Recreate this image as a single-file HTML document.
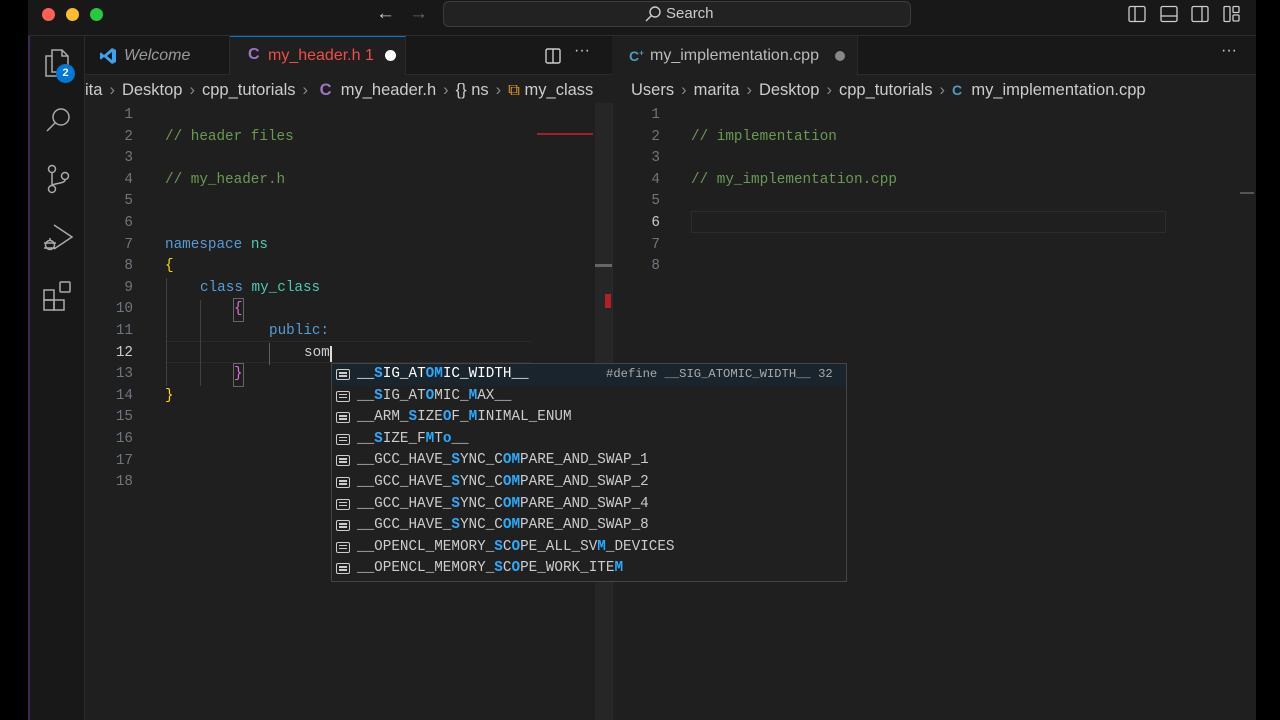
<!DOCTYPE html>
<html><head><style>
*{margin:0;padding:0;box-sizing:border-box}
body{width:1280px;height:720px;background:#000;position:relative;overflow:hidden;font-family:"Liberation Sans",sans-serif;color:#ccc}
.abs{position:absolute}
.mono{font-family:"Liberation Mono",monospace;font-size:14.3px;white-space:pre}
#win{left:28px;top:0;width:1228px;height:720px;background:#1f1f1f}
.ln{position:absolute;width:40px;text-align:right;color:#6e7681}
.cm{color:#6a9955}.kw{color:#569cd6}.ty{color:#4ec9b0}.br{color:#ffd700}.pb{color:#da70d6}
.row{position:absolute;left:0;height:21.6px;line-height:21.6px;width:100%}
.ic{position:absolute;left:4px;top:5px;width:14px;height:11px;border:1.5px solid #ccc;border-radius:2px}
.ic:before,.ic:after{content:"";position:absolute;left:2px;right:2px;height:1.5px;background:#ccc}
.ic:before{top:2px}.ic:after{top:5px}
.h{color:#2aaaff;font-weight:bold}
.bc{font-size:16.5px;color:#ccc;position:absolute;top:81px;white-space:nowrap}
.sep{color:#888;margin:0 7px}
</style></head><body>
<div id="win" class="abs"></div>
<!-- title bar -->
<div class="abs" style="left:28px;top:0;width:1228px;height:36px;background:#181818;border-bottom:1px solid #2b2b2b"></div>
<div class="abs" style="left:42px;top:8px;width:13px;height:13px;border-radius:50%;background:#fe5f57"></div>
<div class="abs" style="left:66px;top:8px;width:13px;height:13px;border-radius:50%;background:#febc2e"></div>
<div class="abs" style="left:90px;top:8px;width:13px;height:13px;border-radius:50%;background:#28c840"></div>
<div class="abs" style="left:376px;top:3px;font-size:19px;color:#ccc">←</div>
<div class="abs" style="left:409px;top:3px;font-size:19px;color:#666">→</div>
<div class="abs" style="left:443px;top:1px;width:468px;height:26px;border:1px solid #3c3c3c;border-radius:6px;background:#222"></div>
<svg class="abs" style="left:644px;top:5px" width="18" height="18" viewBox="0 0 18 18"><circle cx="11" cy="7" r="5" fill="none" stroke="#ccc" stroke-width="1.4"/><path d="M7.5 10.5L2 16" stroke="#ccc" stroke-width="1.4"/></svg>
<div class="abs" style="left:666px;top:5px;font-size:15px;color:#ccc">Search</div>
<svg class="abs" style="left:1128px;top:5px" width="120" height="18" viewBox="0 0 120 18" fill="none" stroke="#ccc" stroke-width="1.3">
<rect x="1" y="1.5" width="16" height="15" rx="1.5"/><path d="M7 1.5v15"/>
<rect x="33" y="1.5" width="16" height="15" rx="1.5"/><path d="M33 11h16"/>
<rect x="64" y="1.5" width="16" height="15" rx="1.5"/><path d="M74 1.5v15"/>
<rect x="96" y="1.5" width="6" height="15" rx="1"/><rect x="105" y="1.5" width="6" height="6" rx="1"/><rect x="105" y="10" width="6" height="6" rx="1"/></svg>
<!-- activity bar -->
<div class="abs" style="left:28px;top:36px;width:57px;height:684px;background:#181818;border-right:1px solid #2b2b2b"></div>
<div class="abs" style="left:28px;top:36px;width:2px;height:684px;background:#3a2a55"></div>
<svg class="abs" style="left:42px;top:46px" width="32" height="34" viewBox="0 0 32 34" fill="none" stroke="#aaa" stroke-width="1.5"><path d="M10 4h10l6 6v16H10z"/><path d="M20 4v6h6"/><path d="M10 10H4v20h16v-4"/></svg>
<div class="abs" style="left:56px;top:64px;width:19px;height:19px;border-radius:50%;background:#0078d4;color:#fff;font-size:11px;font-weight:bold;text-align:center;line-height:19px">2</div>
<svg class="abs" style="left:44px;top:106px" width="28" height="28" viewBox="0 0 28 28" fill="none" stroke="#aaa" stroke-width="1.5"><circle cx="17" cy="11" r="8"/><path d="M11 17L3 25"/></svg>
<svg class="abs" style="left:44px;top:164px" width="28" height="30" viewBox="0 0 28 30" fill="none" stroke="#aaa" stroke-width="1.5"><circle cx="8" cy="5" r="3.5"/><circle cx="8" cy="25" r="3.5"/><circle cx="21" cy="12" r="3.5"/><path d="M8 9v12M21 16c0 4-13 3-13 6"/></svg>
<svg class="abs" style="left:42px;top:222px" width="32" height="32" viewBox="0 0 32 32" fill="none" stroke="#aaa" stroke-width="1.5"><path d="M12 3l18 12-18 12" /><circle cx="8" cy="23" r="4.5"/><path d="M2 21h12M2 26h12M8 18v-2"/></svg>
<svg class="abs" style="left:42px;top:280px" width="32" height="32" viewBox="0 0 32 32" fill="none" stroke="#aaa" stroke-width="1.5"><rect x="2" y="10" width="10" height="10"/><rect x="2" y="20" width="10" height="10"/><rect x="12" y="20" width="10" height="10"/><rect x="18" y="2" width="10" height="10" rx="1"/></svg>
<!-- tab bar left -->
<div class="abs" style="left:85px;top:36px;width:527px;height:39px;background:#181818;border-bottom:1px solid #2b2b2b"></div>
<div class="abs" style="left:85px;top:36px;width:145px;height:39px;border-right:1px solid #2b2b2b"></div>
<svg class="abs" style="left:99px;top:47px" width="18" height="18" viewBox="0 0 18 18"><path d="M13 1L17 3v12l-4 2L5 10l-3 2.5L1 12V6l1-.5L5 8z M13 5L8 9l5 4z" fill="#3ba1f0" fill-rule="evenodd"/></svg>
<div class="abs" style="left:124px;top:47px;font-size:16px;font-style:italic;color:#999">Welcome</div>
<div class="abs" style="left:230px;top:36px;width:176px;height:39px;background:#1f1f1f;border-top:1px solid #0078d4;border-right:1px solid #2b2b2b"></div>
<div class="abs" style="left:248px;top:46px;font-size:16px;font-weight:bold;color:#a074c4">C</div>
<div class="abs" style="left:268px;top:47px;font-size:16px;color:#f14c4c">my_header.h 1</div>
<div class="abs" style="left:385px;top:50px;width:11px;height:11px;border-radius:50%;background:#fff"></div>
<svg class="abs" style="left:544px;top:47px" width="18" height="18" viewBox="0 0 18 18" fill="none" stroke="#ccc" stroke-width="1.4"><rect x="2" y="2" width="14" height="14" rx="1.5"/><path d="M9 2v14"/></svg>
<div class="abs" style="left:574px;top:42px;font-size:16px;color:#ccc">···</div>
<!-- tab bar right -->
<div class="abs" style="left:612px;top:36px;width:644px;height:39px;background:#181818;border-bottom:1px solid #2b2b2b;border-left:1px solid #2b2b2b"></div>
<div class="abs" style="left:612px;top:36px;width:246px;height:40px;background:#1f1f1f;border-right:1px solid #2b2b2b"></div>
<div class="abs" style="left:629px;top:48px;font-size:14px;font-weight:bold;color:#519aba">C<sup style="font-size:8px">+</sup></div>
<div class="abs" style="left:650px;top:47px;font-size:16px;color:#bbb">my_implementation.cpp</div>
<div class="abs" style="left:835px;top:51px;width:10px;height:10px;border-radius:50%;background:#888"></div>
<div class="abs" style="left:1221px;top:42px;font-size:16px;color:#ccc">···</div>
<!-- breadcrumbs -->
<div class="bc" style="left:85px">ita<span class="sep">›</span>Desktop<span class="sep">›</span>cpp_tutorials<span class="sep">›</span> <b style="color:#a074c4">C</b>&nbsp; my_header.h<span class="sep">›</span>{} ns<span class="sep">›</span><span style="color:#ee9d28">⧉</span> my_class</div>
<div class="bc" style="left:631px">Users<span class="sep">›</span>marita<span class="sep">›</span>Desktop<span class="sep">›</span>cpp_tutorials<span class="sep">›</span><b style="color:#519aba;font-size:14px">C</b> &nbsp;my_implementation.cpp</div>
<!-- left editor -->
<div class="abs" style="left:595px;top:103px;width:17px;height:617px;background:#262626"></div>
<div class="abs" style="left:595px;top:264px;width:17px;height:3px;background:#666"></div>
<div class="abs" style="left:605px;top:294px;width:6px;height:14px;background:#b0202a"></div>
<div class="abs" style="left:537px;top:133px;width:56px;height:2px;background:#a02030"></div>
<div class="abs" style="left:165px;top:341px;width:366px;height:22px;border-top:1px solid #2a2a2a;border-bottom:1px solid #2a2a2a"></div>
<div class="abs" style="left:166px;top:278px;width:1px;height:108px;background:#404040"></div>
<div class="abs" style="left:200px;top:300px;width:1px;height:86px;background:#404040"></div>
<div class="abs" style="left:269px;top:343px;width:1px;height:22px;background:#606060"></div>
<div class="abs mono" style="left:85px;top:105px;width:510px;height:600px">
<div class="row" style="top:0"><span class="ln" style="left:8px">1</span></div>
<div class="row" style="top:21.6px"><span class="ln" style="left:8px">2</span><span class="cm" style="position:absolute;left:80px">// header files</span></div>
<div class="row" style="top:43.2px"><span class="ln" style="left:8px">3</span></div>
<div class="row" style="top:64.8px"><span class="ln" style="left:8px">4</span><span class="cm" style="position:absolute;left:80px">// my_header.h</span></div>
<div class="row" style="top:86.4px"><span class="ln" style="left:8px">5</span></div>
<div class="row" style="top:108px"><span class="ln" style="left:8px">6</span></div>
<div class="row" style="top:129.6px"><span class="ln" style="left:8px">7</span><span style="position:absolute;left:80px"><span class="kw">namespace</span> <span class="ty">ns</span></span></div>
<div class="row" style="top:151.2px"><span class="ln" style="left:8px">8</span><span class="br" style="position:absolute;left:80px">{</span></div>
<div class="row" style="top:172.8px"><span class="ln" style="left:8px">9</span><span style="position:absolute;left:115px"><span class="kw">class</span> <span class="ty">my_class</span></span></div>
<div class="row" style="top:194.4px"><span class="ln" style="left:8px">10</span><span class="pb" style="position:absolute;left:149px;outline:1px solid #666">{</span></div>
<div class="row" style="top:216px"><span class="ln" style="left:8px">11</span><span class="kw" style="position:absolute;left:184px">public:</span></div>
<div class="row" style="top:237.6px"><span class="ln" style="left:8px;color:#ccc">12</span><span style="position:absolute;left:219px;color:#ccc">som</span><span style="position:absolute;left:245px;top:3px;width:2px;height:16px;background:#ddd"></span></div>
<div class="row" style="top:259.2px"><span class="ln" style="left:8px">13</span><span class="pb" style="position:absolute;left:149px;outline:1px solid #666">}</span></div>
<div class="row" style="top:280.8px"><span class="ln" style="left:8px">14</span><span class="br" style="position:absolute;left:80px">}</span></div>
<div class="row" style="top:302.4px"><span class="ln" style="left:8px">15</span></div>
<div class="row" style="top:324px"><span class="ln" style="left:8px">16</span></div>
<div class="row" style="top:345.6px"><span class="ln" style="left:8px">17</span></div>
<div class="row" style="top:367.2px"><span class="ln" style="left:8px">18</span></div>
</div>
<!-- right editor -->
<div class="abs" style="left:612px;top:103px;width:1px;height:617px;background:#2b2b2b"></div>
<div class="abs" style="left:691px;top:211px;width:475px;height:22px;border:1px solid #2c2c2c"></div>
<div class="abs" style="left:1240px;top:192px;width:14px;height:2px;background:#555"></div>
<div class="abs mono" style="left:612px;top:105px;width:600px;height:200px">
<div class="row" style="top:0"><span class="ln" style="left:8px">1</span></div>
<div class="row" style="top:21.6px"><span class="ln" style="left:8px">2</span><span class="cm" style="position:absolute;left:79px">// implementation</span></div>
<div class="row" style="top:43.2px"><span class="ln" style="left:8px">3</span></div>
<div class="row" style="top:64.8px"><span class="ln" style="left:8px">4</span><span class="cm" style="position:absolute;left:79px">// my_implementation.cpp</span></div>
<div class="row" style="top:86.4px"><span class="ln" style="left:8px">5</span></div>
<div class="row" style="top:108px"><span class="ln" style="left:8px;color:#ccc">6</span></div>
<div class="row" style="top:129.6px"><span class="ln" style="left:8px">7</span></div>
<div class="row" style="top:151.2px"><span class="ln" style="left:8px">8</span></div>
</div>
<!-- suggest -->
<div class="abs mono" style="left:331px;top:363px;width:516px;height:219px;background:#202020;border:1px solid #454545;color:#ccc">
<div class="row" style="top:0;background:#04395e33"><span class="ic" style="left:4px"></span><span style="position:absolute;left:25px;color:#fff">__<span class="h">S</span>IG_AT<span class="h">OM</span>IC_WIDTH__</span><span style="position:absolute;left:274px;color:#aaa;font-size:12.2px">#define __SIG_ATOMIC_WIDTH__ 32</span></div>
<div class="row" style="top:21.6px"><span class="ic"></span><span style="position:absolute;left:25px">__<span class="h">S</span>IG_AT<span class="h">O</span>MIC_<span class="h">M</span>AX__</span></div>
<div class="row" style="top:43.2px"><span class="ic"></span><span style="position:absolute;left:25px">__ARM_<span class="h">S</span>IZE<span class="h">O</span>F_<span class="h">M</span>INIMAL_ENUM</span></div>
<div class="row" style="top:64.8px"><span class="ic"></span><span style="position:absolute;left:25px">__<span class="h">S</span>IZE_F<span class="h">M</span>T<span class="h">o</span>__</span></div>
<div class="row" style="top:86.4px"><span class="ic"></span><span style="position:absolute;left:25px">__GCC_HAVE_<span class="h">S</span>YNC_C<span class="h">OM</span>PARE_AND_SWAP_1</span></div>
<div class="row" style="top:108px"><span class="ic"></span><span style="position:absolute;left:25px">__GCC_HAVE_<span class="h">S</span>YNC_C<span class="h">OM</span>PARE_AND_SWAP_2</span></div>
<div class="row" style="top:129.6px"><span class="ic"></span><span style="position:absolute;left:25px">__GCC_HAVE_<span class="h">S</span>YNC_C<span class="h">OM</span>PARE_AND_SWAP_4</span></div>
<div class="row" style="top:151.2px"><span class="ic"></span><span style="position:absolute;left:25px">__GCC_HAVE_<span class="h">S</span>YNC_C<span class="h">OM</span>PARE_AND_SWAP_8</span></div>
<div class="row" style="top:172.8px"><span class="ic"></span><span style="position:absolute;left:25px">__OPENCL_MEMORY_<span class="h">S</span>C<span class="h">O</span>PE_ALL_SV<span class="h">M</span>_DEVICES</span></div>
<div class="row" style="top:194.4px"><span class="ic"></span><span style="position:absolute;left:25px">__OPENCL_MEMORY_<span class="h">S</span>C<span class="h">O</span>PE_WORK_ITE<span class="h">M</span></span></div>
</div>
</body></html>
